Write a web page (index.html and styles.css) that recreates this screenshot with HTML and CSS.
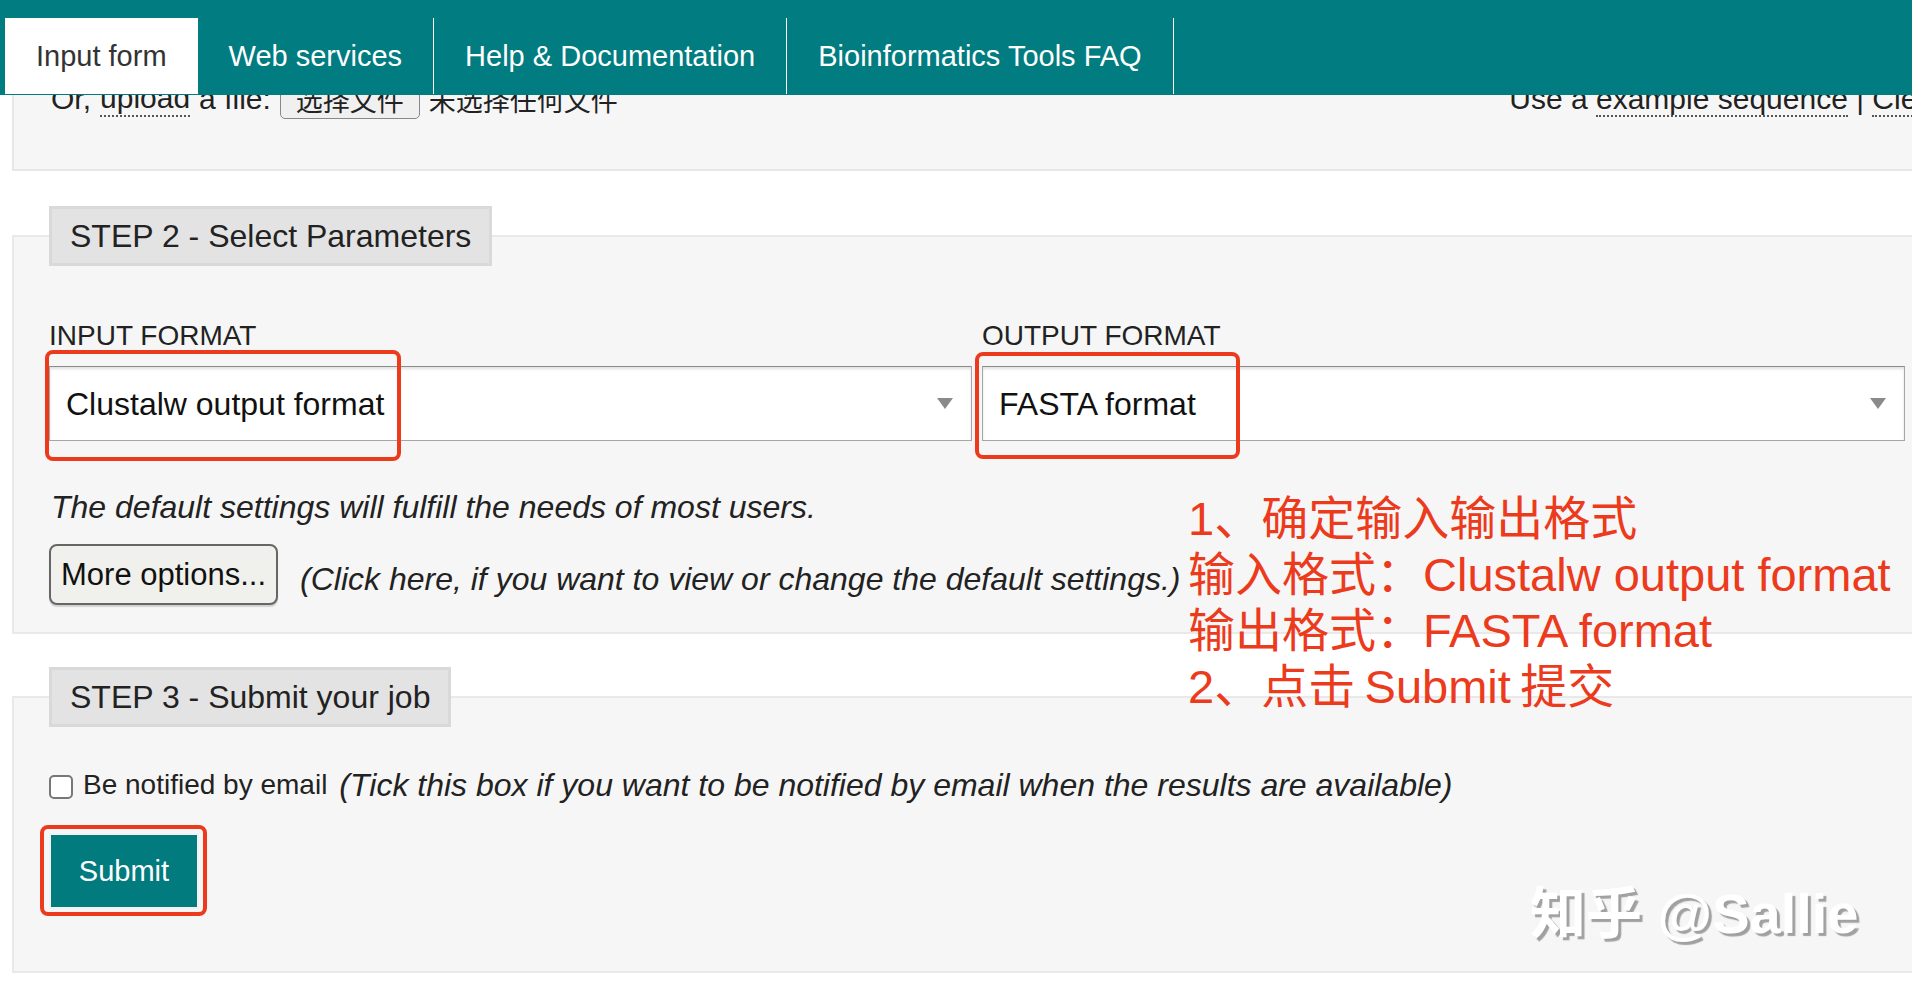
FILE: index.html
```html
<!DOCTYPE html>
<html lang="en">
<head>
    <meta charset="UTF-8">
    <title>EMBOSS Seqret - Input form</title>
    <link rel="stylesheet" href="styles.css">
</head>
<body>
    <nav class="topnav">
        <ul class="tabs">
            <li class="tab active">Input form</li>
            <li class="tab">Web services</li>
            <li class="tab">Help &amp; Documentation</li>
            <li class="tab">Bioinformatics Tools FAQ</li>
        </ul>
    </nav>

    <div class="page">
        <div class="panel-top">
            <div class="upload-row">
                <div class="upload">
                    Or, <abbr class="dotted">upload</abbr> a file:
                    <button class="file-btn" type="button">选择文件</button>
                    <span class="cjk">未选择任何文件</span>
                </div>
                <div class="examples">
                    Use a <abbr class="dotted">example sequence</abbr> | <abbr class="dotted">Clear</abbr>
                </div>
            </div>
        </div>

        <fieldset class="step">
            <legend>STEP 2 - Select Parameters</legend>
            <div class="params">
                <div class="param">
                    <label class="param-label"><abbr class="dotted">INPUT FORMAT</abbr></label>
                    <div class="select-wrap">
                        <select class="select">
                            <option>Clustalw output format</option>
                        </select>
                    </div>
                </div>
                <div class="param">
                    <label class="param-label">OUTPUT FORMAT</label>
                    <div class="select-wrap">
                        <select class="select">
                            <option>FASTA format</option>
                        </select>
                    </div>
                </div>
            </div>
            <p class="note">The default settings will fulfill the needs of most users.</p>
            <div class="options-row">
                <button class="btn-more" type="button">More options...</button>
                <span class="note">(Click here, if you want to view or change the default settings.)</span>
            </div>
        </fieldset>

        <fieldset class="step step-last">
            <legend>STEP 3 - Submit your job</legend>
            <div class="notify-row">
                <input class="check" type="checkbox" id="notify">
                <label for="notify">Be notified by email</label>
                <span class="note">(Tick this box if you want to be notified by email when the results are available)</span>
            </div>
            <button class="btn-submit" type="button">Submit</button>
        </fieldset>
    </div>

    <!-- annotations drawn on top of the screenshot -->
    <div class="mark mark-input"></div>
    <div class="mark mark-output"></div>
    <div class="mark mark-submit"></div>
    <div class="annot">
        <p>1、确定输入输出格式</p>
        <p>输入格式：Clustalw output format</p>
        <p>输出格式：FASTA format</p>
        <p>2、点击&thinsp;Submit&thinsp;提交</p>
    </div>
    <div class="watermark">知乎 @Sallie</div>
</body>
</html>
```

FILE: styles.css
```css
html {
    overflow: hidden;
}
body {
    margin: 0;
    font-family: "Liberation Sans", Arial, "Noto Sans CJK SC", sans-serif;
    color: #222;
    background-color: #fff;
}

/* fixed header */
.topnav {
    position: fixed;
    top: 0;
    left: 0;
    right: 0;
    height: 95px;
    background-color: #017c80;
    z-index: 5;
}
.tabs {
    display: flex;
    margin: 0;
    padding: 18px 0 0 5px;
    list-style: none;
}
.tab {
    padding: 0 31px;
    line-height: 76px;
    font-size: 29px;
    color: #fff;
    border-right: 1px solid #fff;
}
.tab.active {
    background-color: #fff;
    color: #333;
    border-right: none;
}

.page {
    width: 1942px;
}

.dotted {
    text-decoration: none;
    border-bottom: 2px dotted #555;
}

/* STEP 1 (scrolled under header) */
.panel-top {
    margin-left: 12px;
    padding: 79px 20px 50px 37px;
    background-color: #f6f6f6;
    border: 2px solid #e7e7e7;
    border-top: none;
}
.upload-row {
    display: flex;
    justify-content: space-between;
    align-items: center;
    height: 40px;
    font-size: 30px;
}
.upload {
    display: flex;
    align-items: center;
    gap: 9px;
}
.examples {
    margin-right: -24px;
    white-space: nowrap;
}
.file-btn {
    height: 40px;
    padding: 0 15px;
    font-family: "Noto Sans CJK SC", sans-serif;
    font-size: 27px;
    line-height: 1;
    color: #222;
    background-color: #f0f0f0;
    border: 1px solid #888;
    border-radius: 5px;
}
.cjk {
    font-family: "Noto Sans CJK SC", sans-serif;
    font-size: 27px;
}

/* steps */
.step {
    box-sizing: border-box;
    margin: 35px 0 0 12px;
    padding: 55px 35px 27px;
    background-color: #f6f6f6;
    border: 2px solid #e9e9e9;
}
.step-last {
    margin-top: 33px;
    padding-top: 41px;
    padding-bottom: 62px;
}
.step legend {
    padding: 10px 18px;
    font-size: 32px;
    line-height: 34px;
    color: #222;
    background-color: #e3e3e3;
    border: 3px solid #d9d9d9;
}

.params {
    display: grid;
    grid-template-columns: 1fr 1fr;
    gap: 10px;
}
.param-label {
    display: block;
    margin-bottom: 15px;
    font-size: 28px;
    line-height: 30px;
}
.select-wrap {
    position: relative;
}
.select-wrap::after {
    content: "";
    position: absolute;
    right: 19px;
    top: 32px;
    border-left: 8px solid transparent;
    border-right: 8px solid transparent;
    border-top: 11px solid #8a8a8a;
}
.select {
    display: block;
    width: 100%;
    height: 75px;
    padding: 0 16px;
    font-family: "Liberation Sans", Arial, sans-serif;
    font-size: 32px;
    color: #111;
    background-color: #fff;
    border: 1px solid #a6a6a6;
    border-top-color: #8c8c8c;
    border-radius: 0;
    box-shadow: inset 0 2px 3px rgba(0, 0, 0, 0.12);
    appearance: none;
}

.note {
    font-style: italic;
    font-size: 32px;
    line-height: 36px;
    color: #222;
}
p.note {
    margin: 48px 0 0 2px;
}
.options-row {
    display: flex;
    align-items: center;
    gap: 22px;
    margin-top: 19px;
}
.btn-more {
    height: 61px;
    padding: 0 10px;
    font-family: "Liberation Sans", Arial, sans-serif;
    font-size: 31px;
    color: #111;
    background-color: #f0f0ec;
    border: 2px solid #666;
    border-radius: 8px;
    box-shadow: 0 2px 1px rgba(0, 0, 0, 0.15);
}
.options-row .note {
    margin-top: 8px;
}

.notify-row {
    display: flex;
    align-items: center;
    height: 34px;
    font-size: 28px;
}
.check {
    width: 24px;
    height: 24px;
    margin: 4px 10px 0 0;
    background-color: #fff;
    border: 2px solid #777;
    border-radius: 5px;
    appearance: none;
}
.notify-row .note {
    margin-left: 12px;
}
.btn-submit {
    display: block;
    width: 150px;
    height: 76px;
    margin-top: 31px;
    font-family: "Liberation Sans", Arial, sans-serif;
    font-size: 29px;
    color: #fff;
    background-color: #017b7e;
    border: 2px solid #f2f2f2;
}

/* red annotation marks */
.mark {
    position: absolute;
    border: 4px solid #ec3a1d;
    border-radius: 8px;
    z-index: 3;
}
.mark-input {
    left: 45px;
    top: 350px;
    width: 348px;
    height: 103px;
}
.mark-output {
    left: 975px;
    top: 352px;
    width: 257px;
    height: 99px;
}
.mark-submit {
    left: 40px;
    top: 825px;
    width: 159px;
    height: 83px;
}
.annot {
    position: absolute;
    left: 1188px;
    top: 491px;
    color: #ec3a1d;
    font-family: "Liberation Sans", "Noto Sans CJK SC", sans-serif;
    font-size: 47px;
    z-index: 3;
}
.annot p {
    margin: 0;
    line-height: 56px;
    white-space: nowrap;
}
.watermark {
    position: absolute;
    left: 1530px;
    top: 868px;
    font-family: "Liberation Sans", "Noto Sans CJK SC", sans-serif;
    font-size: 56px;
    font-weight: bold;
    color: #fff;
    text-shadow: 3px 3px 1px rgba(0, 0, 0, 0.35);
    z-index: 3;
}
```
